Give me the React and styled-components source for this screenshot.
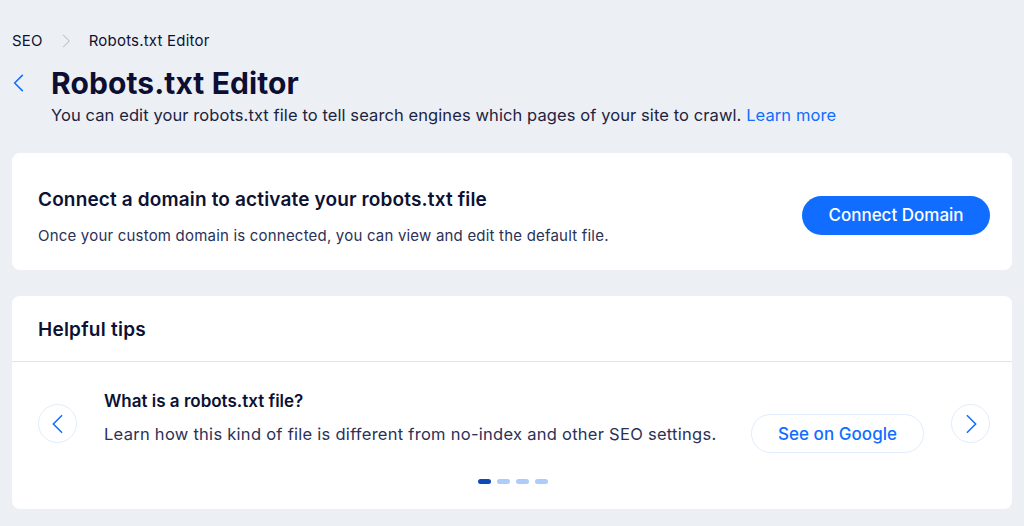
import React from "react";
import styled, { createGlobalStyle } from "styled-components";

const Global = createGlobalStyle`
  html, body { margin: 0; padding: 0; background: #ecf0f5; }
  body { font-family: Inter, "Noto Sans", sans-serif; color: #0c1233; height: 526px; overflow: hidden; }
`;
const Page = styled.div`
  padding: 32px 12px 0;
  display: flex;
  flex-direction: column;
`;
const Crumbs = styled.nav`
  display: flex;
  align-items: center;
  height: 18px;
  font-size: 15px;
  line-height: 18px;
  letter-spacing: 0.2px;
  color: #0c1233;
`;
const ChevronSlot = styled.span`
  display: flex;
  width: 46px;
  justify-content: center;
  color: #a8adb8;
`;
const Header = styled.header`
  display: grid;
  grid-template-columns: 39px 1fr;
  margin-top: 14px;
`;
const BackLink = styled.span`
  display: flex;
  align-items: center;
  height: 38px;
  margin-left: -6px;
  color: #116dff;
`;
const Title = styled.h1`
  margin: 0;
  font-size: 30px;
  line-height: 38px;
  font-weight: 700;
  letter-spacing: 0.1px;
  color: #0c0f33;
`;
const Subtitle = styled.p`
  grid-column: 2;
  margin: 1px 0 0;
  font-size: 16.5px;
  line-height: 24px;
  letter-spacing: 0.09px;
  color: #1c2340;
`;
const LearnMore = styled.a`
  color: #116dff;
`;
const Card = styled.section`
  background: #fff;
  border-radius: 8px;
`;
const DomainCard = styled(Card)`
  margin-top: 26px;
  height: 117px;
  padding: 3px 22px 0 26px;
  box-sizing: border-box;
  display: flex;
  align-items: center;
  justify-content: space-between;
`;
const DomainCopy = styled.div`
  padding-top: 6px;
`;
const DomainHeading = styled.h2`
  margin: 0;
  font-size: 19px;
  line-height: 24px;
  font-weight: 600;
  letter-spacing: 0.15px;
  color: #0c1233;
`;
const DomainText = styled.p`
  margin: 15px 0 0;
  font-size: 15px;
  line-height: 18px;
  letter-spacing: 0.2px;
  color: #2b3157;
`;
const PrimaryButton = styled.button`
  width: 188px;
  height: 39px;
  margin-top: 4px;
  border: 0;
  border-radius: 20px;
  background: #116dff;
  color: #fff;
  font: 500 17px/24px Inter, sans-serif;
  padding: 0;
`;
const TipsCard = styled(Card)`
  margin-top: 26px;
  height: 213px;
  display: flex;
  flex-direction: column;
`;
const TipsHeader = styled.h2`
  margin: 0;
  height: 66px;
  box-sizing: border-box;
  padding: 22px 26px 0;
  font-size: 19px;
  line-height: 24px;
  font-weight: 600;
  letter-spacing: 0.25px;
  border-bottom: 1px solid #dfe5eb;
  color: #0c1233;
`;
const Carousel = styled.div`
  display: flex;
  align-items: flex-start;
  padding: 28px 22px 0 26px;
`;
const RoundButton = styled.button`
  flex: none;
  width: 39px;
  height: 39px;
  margin-top: 14px;
  border-radius: 50%;
  border: 1px solid #e1ecfd;
  background: #fff;
  color: #116dff;
  padding: 0;
  display: flex;
  align-items: center;
  justify-content: center;
`;
const TipBody = styled.div`
  flex: 1;
  margin-left: 27px;
`;
const TipTitle = styled.h3`
  margin: 0;
  font-size: 17px;
  line-height: 22px;
  font-weight: 600;
  color: #0c1233;
`;
const TipText = styled.p`
  margin: 10px 0 0;
  font-size: 16.5px;
  line-height: 24px;
  letter-spacing: 0.27px;
  color: #2b3157;
`;
const OutlineButton = styled.button`
  flex: none;
  width: 173px;
  height: 39px;
  margin: 24px 27px 0 0;
  border-radius: 20px;
  border: 1px solid #e1ecfd;
  background: #fff;
  color: #116dff;
  font: 500 17px/26px Inter, sans-serif;
  letter-spacing: 0.05px;
  padding: 1px 0 0;
`;
const Dots = styled.div`
  display: flex;
  justify-content: center;
  gap: 6px;
  margin-top: 26px;
  padding-left: 2px;
`;
const Dot = styled.span`
  width: 13px;
  height: 5px;
  border-radius: 3px;
  background: ${(p) => (p.$active ? "#0f4ab8" : "#aecbfc")};
`;

const Chevron = ({ dir = "right", size = 24, w = 1.4 }) => (
  <svg width={size} height={size} viewBox="0 0 24 24" fill="none" stroke="currentColor" strokeWidth={w}>
    <path d={dir === "right" ? "M8.5 4.5 16 12l-7.5 7.5" : "M15.5 4.5 8 12l7.5 7.5"} />
  </svg>
);

export default function App() {
  return (
    <>
      <Global />
      <Page>
        <Crumbs>
          <span>SEO</span>
          <ChevronSlot><Chevron size={20} w={1.1} /></ChevronSlot>
          <span>Robots.txt Editor</span>
        </Crumbs>
        <Header>
          <BackLink><Chevron dir="left" size={26} w={1.4} /></BackLink>
          <Title>Robots.txt Editor</Title>
          <Subtitle>
            You can edit your robots.txt file to tell search engines which pages of your site to crawl.{" "}
            <LearnMore>Learn more</LearnMore>
          </Subtitle>
        </Header>
        <DomainCard>
          <DomainCopy>
            <DomainHeading>Connect a domain to activate your robots.txt file</DomainHeading>
            <DomainText>Once your custom domain is connected, you can view and edit the default file.</DomainText>
          </DomainCopy>
          <PrimaryButton>Connect Domain</PrimaryButton>
        </DomainCard>
        <TipsCard>
          <TipsHeader>Helpful tips</TipsHeader>
          <Carousel>
            <RoundButton aria-label="Previous"><Chevron dir="left" size={28} w={1.3} /></RoundButton>
            <TipBody>
              <TipTitle>What is a robots.txt file?</TipTitle>
              <TipText>Learn how this kind of file is different from no-index and other SEO settings.</TipText>
            </TipBody>
            <OutlineButton>See on Google</OutlineButton>
            <RoundButton aria-label="Next"><Chevron size={28} w={1.3} /></RoundButton>
          </Carousel>
          <Dots>
            <Dot $active />
            <Dot />
            <Dot />
            <Dot />
          </Dots>
        </TipsCard>
      </Page>
    </>
  );
}
